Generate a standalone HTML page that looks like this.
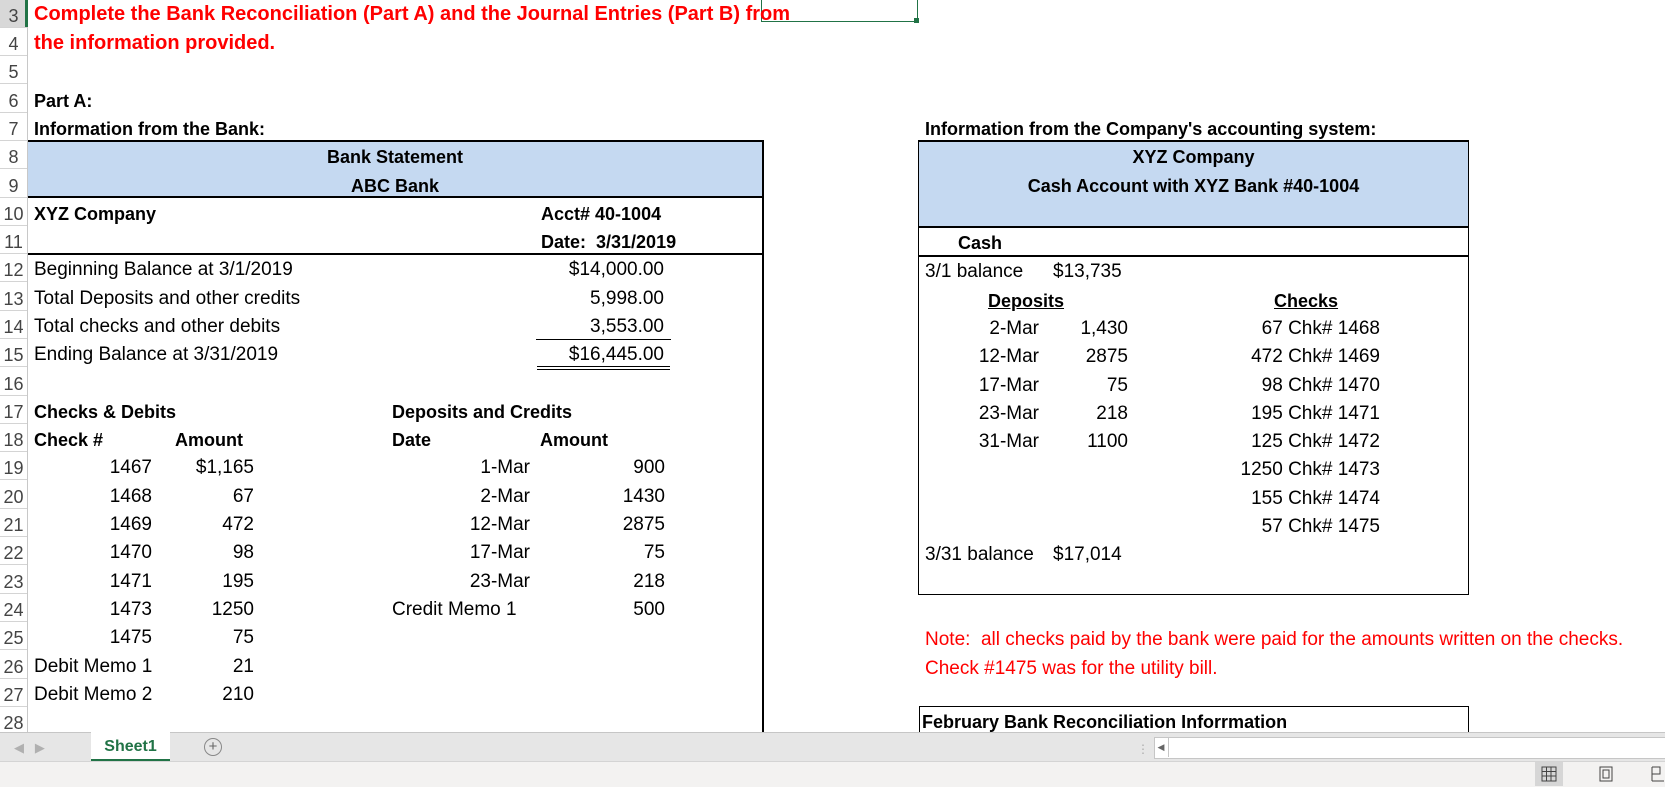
<!DOCTYPE html>
<html><head><meta charset="utf-8"><style>
body{margin:0;width:1665px;height:786px;overflow:hidden;background:#fff;font-family:"Liberation Sans",Arial,sans-serif;font-size:19px;color:#000;position:relative}
.t{position:absolute;line-height:20px;white-space:nowrap;margin-top:3px}
.r{text-align:right}
.b{font-weight:bold;font-size:18px}
.rh{position:absolute;left:0;width:27px;text-align:center;color:#444;font-size:18px;line-height:20px;margin-top:3px}
.hl{position:absolute;left:0;width:27px;height:1px;background:#d4d4d4}
.ln{position:absolute;background:#000}
.red{color:#f00}
</style></head><body>

<div style="position:absolute;left:0;top:0;width:27px;height:732px;background:#fff;border-right:1px solid #c8c8c8"></div>
<div style="position:absolute;left:0;top:0;width:27px;height:27px;background:#d8d8d8"></div>
<div style="position:absolute;left:25px;top:0;width:3px;height:27px;background:#217346"></div>

<div class="rh" style="top:3px">3</div><div class="hl" style="top:27px"></div>
<div class="rh" style="top:31px">4</div><div class="hl" style="top:55px"></div>
<div class="rh" style="top:59px">5</div><div class="hl" style="top:83px"></div>
<div class="rh" style="top:88px">6</div><div class="hl" style="top:112px"></div>
<div class="rh" style="top:116px">7</div><div class="hl" style="top:140px"></div>
<div class="rh" style="top:144px">8</div><div class="hl" style="top:168px"></div>
<div class="rh" style="top:173px">9</div><div class="hl" style="top:197px"></div>
<div class="rh" style="top:201px">10</div><div class="hl" style="top:225px"></div>
<div class="rh" style="top:229px">11</div><div class="hl" style="top:253px"></div>
<div class="rh" style="top:257px">12</div><div class="hl" style="top:281px"></div>
<div class="rh" style="top:286px">13</div><div class="hl" style="top:310px"></div>
<div class="rh" style="top:314px">14</div><div class="hl" style="top:338px"></div>
<div class="rh" style="top:342px">15</div><div class="hl" style="top:366px"></div>
<div class="rh" style="top:371px">16</div><div class="hl" style="top:395px"></div>
<div class="rh" style="top:399px">17</div><div class="hl" style="top:423px"></div>
<div class="rh" style="top:427px">18</div><div class="hl" style="top:451px"></div>
<div class="rh" style="top:455px">19</div><div class="hl" style="top:479px"></div>
<div class="rh" style="top:484px">20</div><div class="hl" style="top:508px"></div>
<div class="rh" style="top:512px">21</div><div class="hl" style="top:536px"></div>
<div class="rh" style="top:540px">22</div><div class="hl" style="top:564px"></div>
<div class="rh" style="top:569px">23</div><div class="hl" style="top:593px"></div>
<div class="rh" style="top:597px">24</div><div class="hl" style="top:621px"></div>
<div class="rh" style="top:625px">25</div><div class="hl" style="top:649px"></div>
<div class="rh" style="top:654px">26</div><div class="hl" style="top:678px"></div>
<div class="rh" style="top:682px">27</div><div class="hl" style="top:706px"></div>
<div class="rh" style="top:710px">28</div>

<div style="position:absolute;left:761px;top:-2px;width:155px;height:22px;border:1px solid #217346"></div>
<div style="position:absolute;left:914px;top:18px;width:5px;height:5px;background:#217346"></div>

<div class="t b red" style="left:34px;top:1px;font-size:20px">Complete the Bank Reconciliation (Part A) and the Journal Entries (Part B) from</div>
<div class="t b red" style="left:34px;top:30px;font-size:20px">the information provided.</div>
<div class="t b" style="left:34px;top:88px">Part A:</div>
<div class="t b" style="left:34px;top:116px">Information from the Bank:</div>
<div class="t b" style="left:925px;top:116px">Information from the Company's accounting system:</div>

<div style="position:absolute;left:28px;top:141px;width:734px;height:56px;background:#c5d9f1"></div>
<div class="ln" style="left:28px;top:140px;width:736px;height:2px"></div>
<div class="ln" style="left:28px;top:196px;width:736px;height:2px"></div>
<div class="ln" style="left:28px;top:253px;width:736px;height:2px"></div>
<div class="ln" style="left:762px;top:140px;width:2px;height:592px"></div>
<div class="t b" style="left:28px;width:734px;text-align:center;top:144px">Bank Statement</div>
<div class="t b" style="left:28px;width:734px;text-align:center;top:173px">ABC Bank</div>
<div class="t b" style="left:34px;top:201px">XYZ Company</div>
<div class="t b" style="left:541px;top:201px">Acct# 40-1004</div>
<div class="t b" style="left:541px;top:229px">Date:&nbsp; 3/31/2019</div>

<div class="t" style="left:34px;top:257px">Beginning Balance at 3/1/2019</div>
<div class="t" style="left:34px;top:286px">Total Deposits and other credits</div>
<div class="t" style="left:34px;top:314px">Total checks and other debits</div>
<div class="t" style="left:34px;top:342px">Ending Balance at 3/31/2019</div>
<div class="t r" style="left:480px;width:184px;top:257px">$14,000.00</div>
<div class="t r" style="left:480px;width:184px;top:286px">5,998.00</div>
<div class="t r" style="left:480px;width:184px;top:314px">3,553.00</div>
<div class="t r" style="left:480px;width:184px;top:342px">$16,445.00</div>
<div class="ln" style="left:536px;top:339px;width:135px;height:1px"></div>
<div class="ln" style="left:537px;top:366px;width:133px;height:1px"></div>
<div class="ln" style="left:537px;top:369px;width:133px;height:1px"></div>

<div class="t b" style="left:34px;top:399px">Checks &amp; Debits</div>
<div class="t b" style="left:392px;top:399px">Deposits and Credits</div>
<div class="t b" style="left:34px;top:427px">Check #</div>
<div class="t b" style="left:175px;top:427px">Amount</div>
<div class="t b" style="left:392px;top:427px">Date</div>
<div class="t b" style="left:540px;top:427px">Amount</div>

<div class="t r" style="left:60px;width:92px;top:455px">1467</div><div class="t r" style="left:170px;width:84px;top:455px">$1,165</div>
<div class="t r" style="left:60px;width:92px;top:484px">1468</div><div class="t r" style="left:170px;width:84px;top:484px">67</div>
<div class="t r" style="left:60px;width:92px;top:512px">1469</div><div class="t r" style="left:170px;width:84px;top:512px">472</div>
<div class="t r" style="left:60px;width:92px;top:540px">1470</div><div class="t r" style="left:170px;width:84px;top:540px">98</div>
<div class="t r" style="left:60px;width:92px;top:569px">1471</div><div class="t r" style="left:170px;width:84px;top:569px">195</div>
<div class="t r" style="left:60px;width:92px;top:597px">1473</div><div class="t r" style="left:170px;width:84px;top:597px">1250</div>
<div class="t r" style="left:60px;width:92px;top:625px">1475</div><div class="t r" style="left:170px;width:84px;top:625px">75</div>
<div class="t" style="left:34px;top:654px">Debit Memo 1</div><div class="t r" style="left:170px;width:84px;top:654px">21</div>
<div class="t" style="left:34px;top:682px">Debit Memo 2</div><div class="t r" style="left:170px;width:84px;top:682px">210</div>

<div class="t r" style="left:410px;width:120px;top:455px">1-Mar</div><div class="t r" style="left:570px;width:95px;top:455px">900</div>
<div class="t r" style="left:410px;width:120px;top:484px">2-Mar</div><div class="t r" style="left:570px;width:95px;top:484px">1430</div>
<div class="t r" style="left:410px;width:120px;top:512px">12-Mar</div><div class="t r" style="left:570px;width:95px;top:512px">2875</div>
<div class="t r" style="left:410px;width:120px;top:540px">17-Mar</div><div class="t r" style="left:570px;width:95px;top:540px">75</div>
<div class="t r" style="left:410px;width:120px;top:569px">23-Mar</div><div class="t r" style="left:570px;width:95px;top:569px">218</div>
<div class="t" style="left:392px;top:597px">Credit Memo 1</div><div class="t r" style="left:570px;width:95px;top:597px">500</div>

<div style="position:absolute;left:919px;top:141px;width:549px;height:86px;background:#c5d9f1"></div>
<div class="ln" style="left:918px;top:140px;width:551px;height:2px"></div>
<div class="ln" style="left:918px;top:226px;width:551px;height:2px"></div>
<div class="ln" style="left:918px;top:255px;width:551px;height:2px"></div>
<div class="ln" style="left:918px;top:140px;width:1px;height:455px"></div>
<div class="ln" style="left:1468px;top:140px;width:1px;height:455px"></div>
<div class="ln" style="left:918px;top:594px;width:551px;height:1px"></div>
<div class="t b" style="left:919px;width:549px;text-align:center;top:144px">XYZ Company</div>
<div class="t b" style="left:919px;width:549px;text-align:center;top:173px">Cash Account with XYZ Bank #40-1004</div>
<div class="t b" style="left:958px;top:230px">Cash</div>
<div class="t" style="left:925px;top:259px">3/1 balance</div>
<div class="t" style="left:1053px;top:259px">$13,735</div>
<div class="t b" style="left:988px;top:288px;text-decoration:underline">Deposits</div>
<div class="t b" style="left:1274px;top:288px;text-decoration:underline">Checks</div>

<div class="t r" style="left:940px;width:99px;top:316px">2-Mar</div><div class="t r" style="left:1050px;width:78px;top:316px">1,430</div>
<div class="t r" style="left:940px;width:99px;top:344px">12-Mar</div><div class="t r" style="left:1050px;width:78px;top:344px">2875</div>
<div class="t r" style="left:940px;width:99px;top:373px">17-Mar</div><div class="t r" style="left:1050px;width:78px;top:373px">75</div>
<div class="t r" style="left:940px;width:99px;top:401px">23-Mar</div><div class="t r" style="left:1050px;width:78px;top:401px">218</div>
<div class="t r" style="left:940px;width:99px;top:429px">31-Mar</div><div class="t r" style="left:1050px;width:78px;top:429px">1100</div>

<div class="t r" style="left:1180px;width:200px;top:316px">67 Chk# 1468</div>
<div class="t r" style="left:1180px;width:200px;top:344px">472 Chk# 1469</div>
<div class="t r" style="left:1180px;width:200px;top:373px">98 Chk# 1470</div>
<div class="t r" style="left:1180px;width:200px;top:401px">195 Chk# 1471</div>
<div class="t r" style="left:1180px;width:200px;top:429px">125 Chk# 1472</div>
<div class="t r" style="left:1180px;width:200px;top:457px">1250 Chk# 1473</div>
<div class="t r" style="left:1180px;width:200px;top:486px">155 Chk# 1474</div>
<div class="t r" style="left:1180px;width:200px;top:514px">57 Chk# 1475</div>
<div class="t" style="left:925px;top:542px">3/31 balance</div>
<div class="t" style="left:1053px;top:542px">$17,014</div>

<div class="t red" style="left:925px;top:627px">Note:&nbsp; all checks paid by the bank were paid for the amounts written on the checks.</div>
<div class="t red" style="left:925px;top:656px">Check #1475 was for the utility bill.</div>

<div class="ln" style="left:919px;top:706px;width:549px;height:1px"></div>
<div class="ln" style="left:919px;top:706px;width:1px;height:26px"></div>
<div class="ln" style="left:1468px;top:706px;width:1px;height:26px"></div>
<div class="t b" style="left:922px;top:709px">February Bank Reconciliation Inforrmation</div>

<div style="position:absolute;left:0;top:732px;width:1665px;height:29px;background:#e6e6e6;border-top:1px solid #c6c6c6"></div>
<div class="t" style="left:14px;top:735px;color:#b0b0b0;font-size:13px">&#9664;&nbsp;&nbsp;&nbsp;&#9654;</div>
<div style="position:absolute;left:91px;top:732px;width:79px;height:27px;background:#fff;border-bottom:3px solid #217346"></div>
<div class="t b" style="left:91px;width:79px;text-align:center;top:734px;color:#217346;font-size:16px">Sheet1</div>
<div style="position:absolute;left:204px;top:738px;width:16px;height:16px;border:1px solid #888;border-radius:50%;text-align:center;line-height:16px;color:#666;font-size:15px">+</div>
<div class="t" style="left:1137px;top:736px;color:#aaa;font-size:12px">&#8942;</div>
<div style="position:absolute;left:1154px;top:737px;width:511px;height:20px;background:#fff;border:1px solid #c6c6c6"></div>
<div style="position:absolute;left:1154px;top:737px;width:14px;height:20px;border-right:1px solid #c6c6c6;color:#666;font-size:9px;line-height:20px;text-align:center">&#9664;</div>

<div style="position:absolute;left:0;top:761px;width:1665px;height:25px;background:#f3f2f1;border-top:1px solid #d4d4d4"></div>
<div style="position:absolute;left:1535px;top:762px;width:28px;height:24px;background:#d6d6d6"></div>
<svg style="position:absolute;left:1541px;top:766px" width="16" height="16"><rect x="1" y="1" width="14" height="14" fill="none" stroke="#444"/><path d="M1 5.5H15M1 10H15M5.5 1V15M10 1V15" stroke="#444"/></svg>
<svg style="position:absolute;left:1598px;top:766px" width="16" height="16"><rect x="2" y="1" width="12" height="14" fill="none" stroke="#444"/><rect x="5" y="4" width="6" height="8" fill="none" stroke="#444"/></svg>
<svg style="position:absolute;left:1650px;top:766px" width="15" height="16"><path d="M2 1V15M2 1H10V8H2M2 15H14" fill="none" stroke="#444"/></svg>
</body></html>
